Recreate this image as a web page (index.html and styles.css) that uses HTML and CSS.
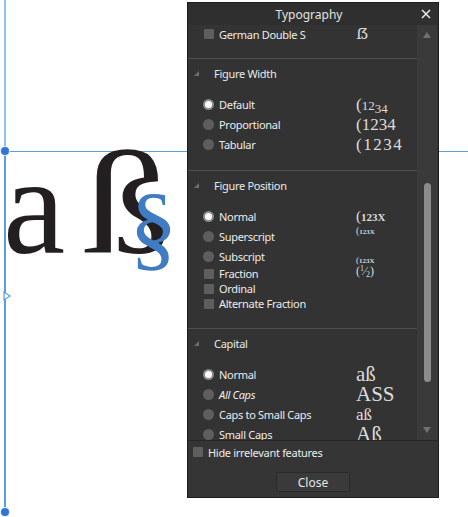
FILE: index.html
```html
<!DOCTYPE html>
<html>
<head>
<meta charset="utf-8">
<link rel="stylesheet" href="styles.css">
</head>
<body>
<div class="canvas">
  <div class="guide-v-top"></div>
  <div class="guide-v"></div>
  <div class="guide-h"></div>
  <div class="handle handle-top"></div>
  <div class="handle handle-bottom"></div>
  <svg class="flow-tri" width="8" height="10" viewBox="0 0 8 10"><path d="M1 1 L7 5 L1 9 Z" fill="#fff" stroke="#5b9be6" stroke-width="1.2"/></svg>
  <div class="art-text"><span class="art-a">a</span><span class="art-ss">ß</span><span class="art-blue">§</span></div>

  <div class="panel">
    <div class="titlebar">
      <span class="title">Typography</span>
      <svg class="close-x" width="10" height="10" viewBox="0 0 10 10"><path d="M1 1 L9 9 M9 1 L1 9" stroke="#e6e6e6" stroke-width="1.6"/></svg>
    </div>
    <div class="body">
      <div class="content">
        <div class="lead">
          <div class="row"><span class="ctl"><span class="check"></span></span><span class="label">German Double S</span><span class="glyph g-ss">ẞ</span></div>
        </div>

        <div class="section">
          <div class="head"><span class="tri"></span>Figure Width</div>
          <div class="rows">
            <div class="row"><span class="ctl"><span class="radio on"></span></span><span class="label">Default</span><span class="glyph g-fig">(<span class="osf">12<span class="dn">34</span></span></span></div>
            <div class="row"><span class="ctl"><span class="radio"></span></span><span class="label">Proportional</span><span class="glyph g-fig">(1234</span></div>
            <div class="row"><span class="ctl"><span class="radio"></span></span><span class="label">Tabular</span><span class="glyph g-fig g-tab">(1234</span></div>
          </div>
        </div>

        <div class="section sec-b">
          <div class="head"><span class="tri"></span>Figure Position</div>
          <div class="rows">
            <div class="row"><span class="ctl"><span class="radio on"></span></span><span class="label">Normal</span><span class="glyph g-pos">(<span class="sc">123X</span></span></div>
            <div class="row"><span class="ctl"><span class="radio"></span></span><span class="label">Superscript</span><span class="glyph g-sup">(<span class="sc">123X</span></span></div>
            <div class="row"><span class="ctl"><span class="radio"></span></span><span class="label">Subscript</span><span class="glyph g-sub">(<span class="sc">123X</span></span></div>
            <div class="row row-s"><span class="ctl"><span class="check"></span></span><span class="label">Fraction</span><span class="glyph g-frac">(<sup>1</sup>⁄<sub>2</sub>)</span></div>
            <div class="row row-s"><span class="ctl"><span class="check"></span></span><span class="label">Ordinal</span><span class="glyph"></span></div>
            <div class="row row-s"><span class="ctl"><span class="check"></span></span><span class="label">Alternate Fraction</span><span class="glyph"></span></div>
          </div>
        </div>

        <div class="section">
          <div class="head"><span class="tri"></span>Capital</div>
          <div class="rows">
            <div class="row"><span class="ctl"><span class="radio on"></span></span><span class="label">Normal</span><span class="glyph g-cap">aß</span></div>
            <div class="row"><span class="ctl"><span class="radio"></span></span><span class="label italic">All Caps</span><span class="glyph g-cap">ASS</span></div>
            <div class="row"><span class="ctl"><span class="radio"></span></span><span class="label">Caps to Small Caps</span><span class="glyph g-cap g-sc2">aß</span></div>
            <div class="row"><span class="ctl"><span class="radio"></span></span><span class="label">Small Caps</span><span class="glyph g-cap">Aß</span></div>
          </div>
        </div>
      </div>
      <div class="scrollbar">
        <span class="arrow up"></span>
        <div class="track"><div class="thumb"></div></div>
        <span class="arrow down"></span>
      </div>
    </div>
    <div class="footer">
      <div class="hide-row"><span class="check"></span><span class="label">Hide irrelevant features</span></div>
      <div class="btn-wrap"><button class="btn">Close</button></div>
    </div>
  </div>
</div>
</body>
</html>
```

FILE: styles.css
```css
html, body {
  margin: 0;
  padding: 0;
  background: #ffffff;
}
.canvas {
  position: relative;
  width: 468px;
  height: 517px;
  overflow: hidden;
  font-family: "Noto Sans", "Open Sans", sans-serif;
}
.guide-v-top {
  position: absolute;
  left: 4px;
  top: 0;
  width: 2px;
  height: 151px;
  background: #8fc3f3;
}
.guide-v {
  position: absolute;
  left: 4px;
  top: 151px;
  width: 2px;
  height: 361px;
  background: #5a9be6;
}
.guide-h {
  position: absolute;
  left: 4px;
  top: 151px;
  width: 464px;
  height: 1px;
  background: #5c9ce4;
}
.handle {
  position: absolute;
  width: 8px;
  height: 8px;
  border-radius: 50%;
  background: #2f76d8;
  box-shadow: 0 0 0 1px #e3eefb;
}
.handle-top { left: 1px; top: 147px; }
.handle-bottom { left: 1px; top: 508px; }
.flow-tri {
  position: absolute;
  left: 3px;
  top: 291px;
}
.art-text {
  position: absolute;
  left: 3px;
  top: 109px;
  font-family: "Liberation Serif", serif;
  font-size: 172px;
  line-height: 1;
  white-space: nowrap;
}
.art-a {
  font-size: 140px;
  color: #231f20;
}
.art-ss {
  display: inline-block;
  font-size: 146px;
  color: #231f20;
  margin-left: 18px;
  transform: scaleX(1.2);
  transform-origin: left bottom;
}
.art-blue {
  font-size: 96px;
  color: #3f7cc4;
  margin-left: -27px;
  position: relative;
  top: 6px;
}

/* panel */
.panel {
  position: absolute;
  left: 187px;
  top: 2px;
  width: 250px;
  height: 494px;
  border: 1px solid #1d1d1d;
  background: #333333;
  display: flex;
  flex-direction: column;
  color: #e9e9e9;
  font-size: 11px;
  letter-spacing: -0.3px;
}
.titlebar {
  height: 22px;
  flex: none;
  background: #2f2f2f;
  display: flex;
  align-items: center;
  justify-content: center;
  position: relative;
  font-size: 12px;
  letter-spacing: 0;
}
.title { margin-right: 8px; color: #e3e3e3; }
.close-x {
  position: absolute;
  right: 7px;
  top: 6px;
}
.body {
  height: 415px;
  flex: none;
  display: flex;
  border-bottom: 1px solid #262626;
}
.content {
  flex: 1;
  overflow: hidden;
  background: #333333;
}
.lead { padding-bottom: 15px; }
.section {
  border-top: 1px solid #4f4f4f;
}
.head {
  height: 28px;
  display: flex;
  align-items: center;
  padding-left: 26px;
  position: relative;
  color: #e9e9e9;
}
.tri {
  position: absolute;
  left: 6px;
  top: 12px;
  width: 0;
  height: 0;
  border-left: 5px solid transparent;
  border-bottom: 5px solid #6f6f6f;
}
.rows { padding: 7px 0 16px; }
.sec-b .rows { padding-bottom: 17px; }
.row {
  height: 20px;
  display: grid;
  grid-template-columns: 31px 137px 1fr;
  align-items: center;
  white-space: nowrap;
}
.lead .row { height: 18px; }
.row-s { height: 15px; }
.ctl {
  display: flex;
  justify-content: flex-end;
  padding-right: 5px;
}
.check {
  display: block;
  width: 10px;
  height: 10px;
  border-radius: 1px;
  background: #5e5e5e;
}
.radio {
  display: block;
  width: 11px;
  height: 11px;
  border-radius: 50%;
  background: #5e5e5e;
  position: relative;
}
.radio.on {
  background: #8a8a8a;
}
.radio.on::after {
  content: "";
  position: absolute;
  left: 2px;
  top: 2px;
  width: 7px;
  height: 7px;
  border-radius: 50%;
  background: #ffffff;
}
.label { color: #ececec; }
.italic { font-style: italic; }
.glyph {
  font-family: "Liberation Serif", "DejaVu Serif", serif;
  color: #dcdcdc;
  line-height: 1;
  letter-spacing: 0;
}
.g-ss { font-family: "DejaVu Serif", serif; font-size: 15px; }
.g-fig { font-size: 17px; }
.osf { font-size: 13px; }
.osf .dn { position: relative; top: 3px; }
.g-tab { letter-spacing: 1.5px; }
.g-pos { font-size: 15px; }
.g-pos .sc { font-size: 11px; font-weight: bold; }
.g-sup { font-size: 10px; position: relative; top: -5px; }
.g-sup .sc { font-size: 7px; font-weight: bold; }
.g-sub { font-size: 9px; position: relative; top: 4px; }
.g-sub .sc { font-size: 7px; font-weight: bold; }
.g-frac { font-size: 12px; position: relative; top: -2px; }
.g-frac sup { font-size: 8px; vertical-align: 4px; }
.g-frac sub { font-size: 8px; vertical-align: -2px; }
.g-cap { font-size: 21px; }
.g-sc2 { font-size: 17px; }

.scrollbar {
  width: 20px;
  flex: none;
  background: #3a3a3a;
  display: flex;
  flex-direction: column;
  align-items: center;
  margin-right: 1px;
}
.arrow {
  display: block;
  width: 0;
  height: 0;
  border-left: 4px solid transparent;
  border-right: 4px solid transparent;
  flex: none;
}
.arrow.up {
  border-bottom: 6px solid #707070;
  margin-top: 7px;
}
.arrow.down {
  border-top: 6px solid #707070;
  margin-bottom: 7px;
}
.track {
  flex: 1;
  width: 7px;
  padding-top: 145px;
  padding-bottom: 45px;
}
.thumb {
  height: 100%;
  border-radius: 4px;
  background: #8b8b8b;
}
.footer {
  flex: 1;
  background: #353535;
  display: flex;
  flex-direction: column;
}
.hide-row {
  height: 22px;
  display: flex;
  align-items: center;
  padding-left: 5px;
  gap: 5px;
}
.btn-wrap {
  display: flex;
  justify-content: center;
  padding-top: 9px;
}
.btn {
  width: 74px;
  height: 20px;
  border: 1px solid #2a2a2a;
  border-radius: 2px;
  background: #3a3a3a;
  color: #e6e6e6;
  font-family: "Noto Sans", "Open Sans", sans-serif;
  font-size: 12px;
  padding: 0;
}
```
